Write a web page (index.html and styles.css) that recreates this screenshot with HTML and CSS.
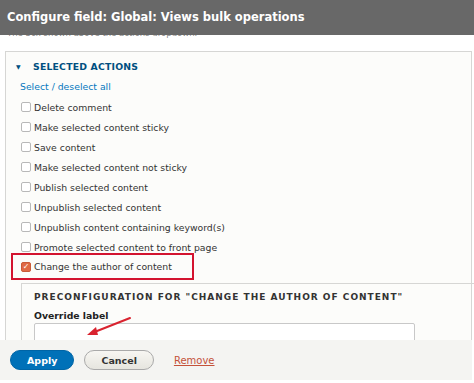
FILE: index.html
```html
<!DOCTYPE html>
<html lang="en">
<head>
  <meta charset="UTF-8" />
  <title>Configure field</title>
  <link rel="stylesheet" href="styles.css">
</head>
<body>
  <div class="dialog">
    <header class="titlebar">
      <h1>Configure field: Global: Views bulk operations</h1>
    </header>

    <main class="dialog-body">
      <p class="desc">The box shown above the actions dropdown.</p>

      <section class="fieldset">
        <div class="legend"><span class="caret">▼</span>Selected actions</div>
        <a href="#" class="toggle">Select / deselect all</a>
        <ul class="actions">
          <li><span class="cb"></span>Delete comment</li>
          <li><span class="cb"></span>Make selected content sticky</li>
          <li><span class="cb"></span>Save content</li>
          <li><span class="cb"></span>Make selected content not sticky</li>
          <li><span class="cb"></span>Publish selected content</li>
          <li><span class="cb"></span>Unpublish selected content</li>
          <li><span class="cb"></span>Unpublish content containing keyword(s)</li>
          <li><span class="cb"></span>Promote selected content to front page</li>
          <li class="hl"><span class="cb on">✓</span>Change the author of content</li>
        </ul>

        <div class="subset">
          <div class="sublegend">Preconfiguration for "Change the author of content"</div>
          <label class="field-label">Override label</label>
          <div class="text-input"></div>
        </div>
      </section>

      <svg class="arrow" width="50" height="24" viewBox="0 0 50 24">
        <line x1="46" y1="2" x2="8" y2="17" stroke="#d9232f" stroke-width="2" stroke-linecap="round" />
        <path d="M3 19 L12 11 L14 19 Z" fill="#d9232f" />
      </svg>
    </main>

    <footer class="buttons">
      <button class="btn primary">Apply</button>
      <button class="btn">Cancel</button>
      <a href="#" class="remove">Remove</a>
    </footer>
  </div>
</body>
</html>
```

FILE: styles.css
```css
* { box-sizing: border-box; }
body {
  margin: 0;
  background: #fff;
  font-family: "DejaVu Sans", Verdana, sans-serif;
  font-size: 9.3px;
  color: #333;
}
.dialog {
  width: 474px;
  height: 383px;
  overflow: hidden;
}
.titlebar {
  background-color: #686868;
  height: 35px;
  padding: 0 7px;
  display: flex;
  align-items: center;
}
.titlebar h1 {
  margin: 0 0 2px;
  font-size: 11.5px;
  font-weight: bold;
  color: #fff;
}
.dialog-body {
  position: relative;
  height: 305px;
  overflow: hidden;
}
.desc {
  margin: -8px 0 0 7px;
  line-height: 12px;
  font-size: 8.5px;
  color: #888;
}
.fieldset {
  margin: 12px 2px 0 5px;
  border: 1px solid #d6d6d4;
  background-color: #fcfcfa;
  padding: 4px 0 40px;
}
.legend {
  height: 20px;
  display: flex;
  align-items: center;
  padding-left: 10px;
  font-weight: bold;
  text-transform: uppercase;
  letter-spacing: 0.2px;
  color: #004f80;
}
.caret {
  font-size: 6px;
  width: 17px;
}
.toggle {
  display: block;
  margin: 1px 0 0 14px;
  line-height: 20px;
  color: #0678be;
  text-decoration: none;
}
.actions {
  list-style: none;
  margin: 0;
  padding: 0 0 0 15px;
}
.actions li {
  height: 20px;
  display: flex;
  align-items: center;
  gap: 3px;
}
.cb {
  width: 10px;
  height: 10px;
  border: 1px solid #b8b8b8;
  border-radius: 2px;
  background-color: #fff;
  display: inline-flex;
  align-items: center;
  justify-content: center;
  font-size: 8px;
  color: #fff;
}
.cb.on {
  background-color: #e06a45;
  border-color: #c95a38;
  font-weight: bold;
}
.actions li.hl {
  width: fit-content;
  height: 27px;
  margin: -4px 0 0 -10px;
  padding: 0 20px 0 8px;
  border: 2px solid #d3132f;
}
.subset {
  margin: 3px -10px 0 15px;
  border: 1px solid #d6d6d4;
  border-right: none;
  padding: 3px 0 0 12px;
}
.sublegend {
  height: 20px;
  display: flex;
  align-items: center;
  font-size: 9px;
  font-weight: bold;
  text-transform: uppercase;
  letter-spacing: 1px;
  color: #333;
}
.field-label {
  display: block;
  margin-top: 2px;
  line-height: 14px;
  font-weight: bold;
  color: #222;
}
.text-input {
  width: 381px;
  height: 26px;
  border: 1px solid #c8c8c8;
  border-radius: 2px;
  background-color: #fff;
}
.arrow {
  position: absolute;
  left: 84px;
  top: 281px;
}
.buttons {
  height: 40px;
  width: 472px;
  background-color: #f4f4f2;
  display: flex;
  align-items: center;
  padding: 0 10px;
  gap: 10px;
}
.btn {
  font-family: inherit;
  font-size: 9.5px;
  font-weight: bold;
  height: 20px;
  border-radius: 10px;
  border: 1px solid #a9a9a9;
  background: linear-gradient(#f7f6f2, #e6e5df);
  color: #333;
  padding: 0 16px;
}
.btn.primary {
  background: #0071b8;
  border-color: #0065a6;
  color: #fff;
  padding: 0 16px;
}
.remove {
  margin-left: 10px;
  color: #c4523a;
  font-size: 10px;
}
```
